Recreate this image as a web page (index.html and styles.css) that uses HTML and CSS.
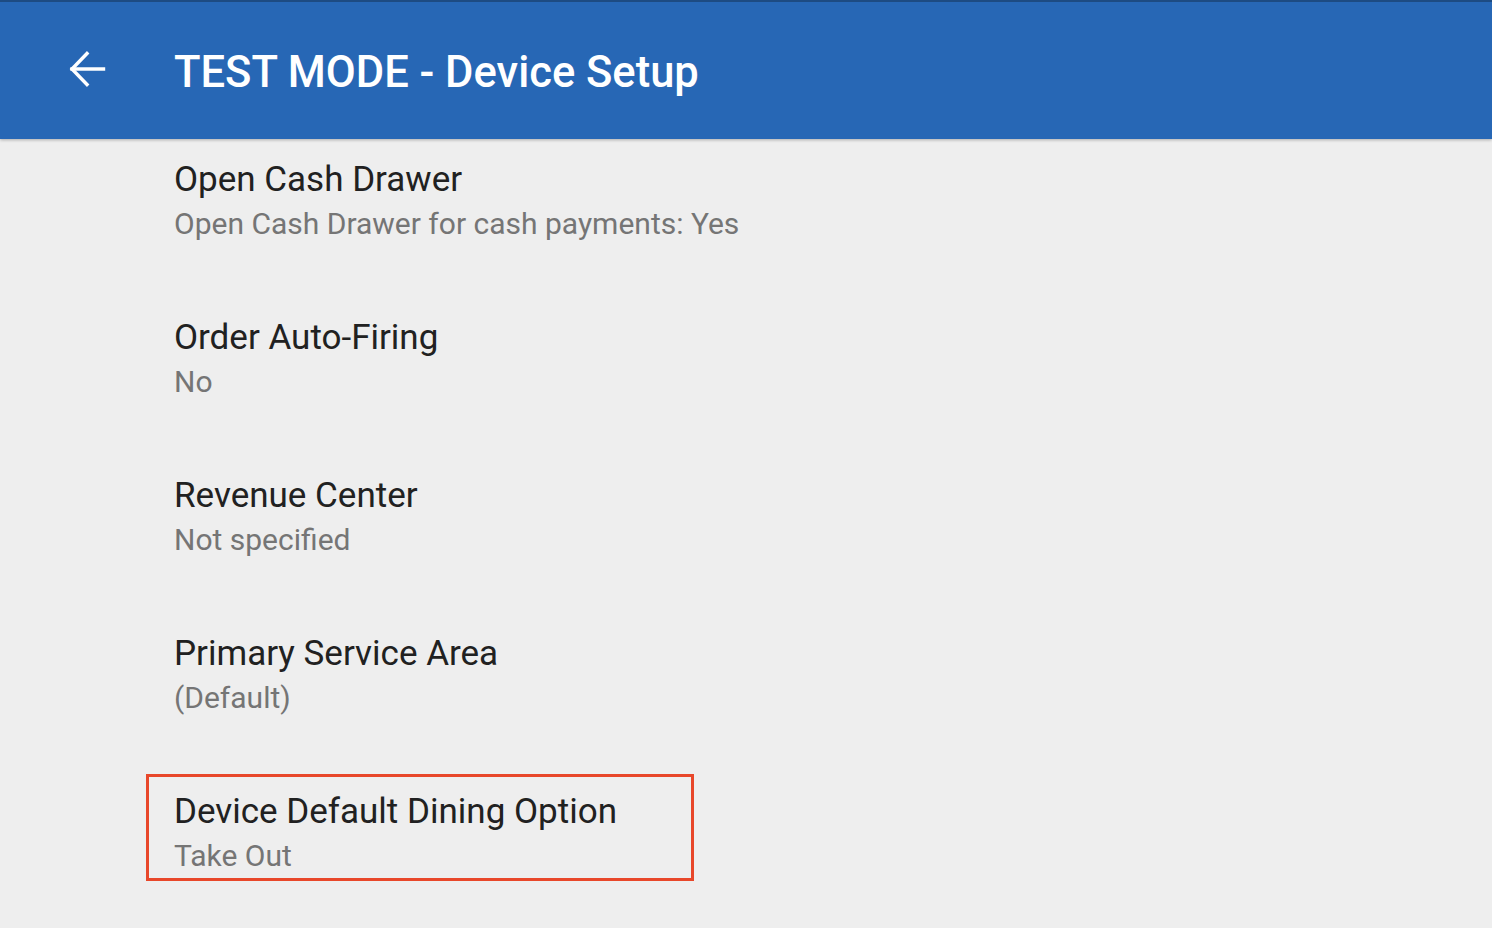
FILE: index.html
```html
<!DOCTYPE html>
<html lang="en">
<head>
<meta charset="utf-8">
<title>TEST MODE - Device Setup</title>
<link rel="stylesheet" href="styles.css">
</head>
<body>
<header class="appbar">
  <button class="back" aria-label="Back">
    <svg width="40" height="40" viewBox="0 0 40 40" fill="none" stroke="#fff" stroke-width="3.4" stroke-linecap="square">
      <path d="M4 20H35.5"/>
      <path d="M19 4.5L4 20L19 35.5"/>
    </svg>
  </button>
  <h1 class="title">TEST MODE - Device Setup</h1>
</header>
<main class="list">
  <div class="item">
    <div class="item-title">Open Cash Drawer</div>
    <div class="item-sub">Open Cash Drawer for cash payments: Yes</div>
  </div>
  <div class="item">
    <div class="item-title">Order Auto-Firing</div>
    <div class="item-sub">No</div>
  </div>
  <div class="item">
    <div class="item-title">Revenue Center</div>
    <div class="item-sub">Not specified</div>
  </div>
  <div class="item">
    <div class="item-title">Primary Service Area</div>
    <div class="item-sub">(Default)</div>
  </div>
  <div class="item highlighted">
    <div class="item-title">Device Default Dining Option</div>
    <div class="item-sub">Take Out</div>
  </div>
</main>
</body>
</html>
```
FILE: styles.css
```css
html, body {
  margin: 0;
  padding: 0;
  height: 100%;
  overflow: hidden;
}
body {
  background: #eeeeee;
  font-family: Roboto, "Liberation Sans", Arial, sans-serif;
}
.appbar {
  position: relative;
  z-index: 1;
  height: 137px;
  border-top: 2px solid #1d4b82;
  background: #2767b5;
  display: flex;
  align-items: center;
  box-shadow: 0 1px 3px rgba(0,0,0,0.28);
}
.back {
  width: 40px;
  height: 40px;
  margin-left: 68px;
  margin-top: -4px;
  padding: 0;
  border: 0;
  background: none;
  display: flex;
}
.title {
  margin: 4px 0 0 66px;
  color: #ffffff;
  font-size: 43.5px;
  font-weight: 500;
  letter-spacing: 0;
}
.list {
  display: flex;
  flex-direction: column;
}
.item {
  position: relative;
  height: 158px;
  box-sizing: border-box;
  padding: 19px 0 0 174px;
}
.item-title {
  font-size: 35px;
  line-height: 44px;
  color: #212121;
}
.item-sub {
  font-size: 30px;
  line-height: 44px;
  color: #757575;
}
.highlighted::after {
  content: "";
  position: absolute;
  left: 146px;
  top: 3px;
  width: 542px;
  height: 101px;
  border: 3px solid #e8472a;
}
```
